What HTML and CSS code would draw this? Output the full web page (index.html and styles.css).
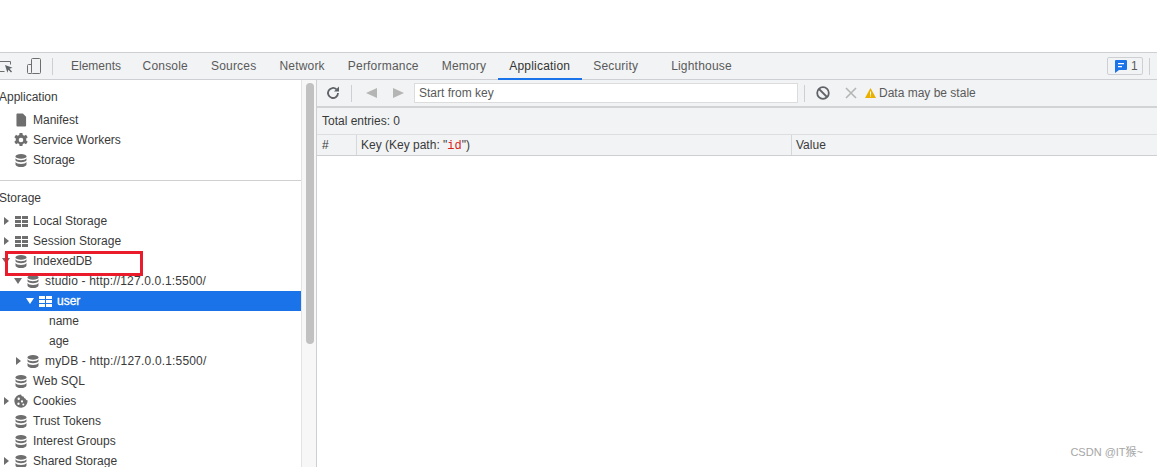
FILE: index.html
```html
<!DOCTYPE html>
<html lang="en">
<head>
<meta charset="utf-8">
<title>DevTools Application</title>
<link rel="stylesheet" href="styles.css">
</head>
<body>
<svg class="defs" width="0" height="0" aria-hidden="true">
  <symbol id="db" viewBox="0 0 12 13">
    <ellipse cx="6" cy="2.400" rx="5.500" ry="2.300"/>
    <path d="M.5 4.200c.6 1.300 2.800 2 5.500 2s4.900-.7 5.500-2v1.900C11.500 7.400 9 8.300 6 8.300S.5 7.400.5 6.100z"/>
    <path d="M.5 8c.6 1.300 2.800 2 5.500 2s4.900-.7 5.500-2v2.400C11.500 11.900 9 13 6 13S.5 11.900.5 10.400z"/>
  </symbol>
  <symbol id="table" viewBox="0 0 13 11">
    <path d="M0 0h6v3H0zM7 0h6v3H7zM0 4h6v3H0zM7 4h6v3H7zM0 8h6v3H0zM7 8h6v3H7z"/>
  </symbol>
  <symbol id="file" viewBox="0 0 12 14">
    <path d="M1.500 0H7.500L11 3.500V13a1 1 0 0 1-1 1H1.500a1 1 0 0 1-1-1V1a1 1 0 0 1 1-1z"/>
  </symbol>
  <symbol id="gear" viewBox="0 0 14 14">
    <path fill-rule="evenodd" d="M5.600 0h2.800l.4 2 1.500.7L12 1.700l1.700 2.500-1.500 1.400v1.800l1.500 1.400-1.700 2.500-1.700-1-1.500.7-.4 2H5.600l-.4-2-1.500-.7-1.700 1L.3 8.800l1.500-1.400V5.600L.3 4.200 2 1.700l1.700 1 1.500-.7zM7 4.700a2.300 2.300 0 1 0 0 4.600 2.300 2.300 0 0 0 0-4.600z"/>
  </symbol>
  <symbol id="cookie" viewBox="0 0 14 14">
    <path fill-rule="evenodd" d="M7 .5c.4 1.400 1.400 2 2.600 2 .2 1.300 1 2 2 2.200.3 1 1 1.500 1.900 1.600A6.600 6.600 0 1 1 7 .5zM4.700 3.500a1.200 1.200 0 1 0 0 2.400 1.200 1.200 0 0 0 0-2.400zM8 6.300a1.100 1.100 0 1 0 0 2.200 1.100 1.100 0 0 0 0-2.200zM4.500 8.600a1.200 1.200 0 1 0 0 2.400 1.200 1.200 0 0 0 0-2.400zM9.300 9.500a1 1 0 1 0 0 2 1 1 0 0 0 0-2z"/>
  </symbol>
  <symbol id="arrow-right" viewBox="0 0 5 8"><path d="M0 0l5 4-5 4z"/></symbol>
  <symbol id="arrow-down" viewBox="0 0 8 6"><path d="M0 0h8L4 6z"/></symbol>
</svg>

<div class="top-space"></div>

<header class="tabbar">
  <svg class="tool-inspect" width="15" height="15" viewBox="0 0 15 15" fill="none">
    <path d="M5.500 12.500H.5V2.500h11v3" stroke="#6e6e6e"/>
    <path d="M6 6l7.500 2.800-3 1 2.500 2.700-1 1-2.600-2.700-1 3z" fill="#5f6368"/>
  </svg>
  <svg class="tool-device" width="14" height="16" viewBox="0 0 14 16" fill="none" stroke="#6e6e6e">
    <rect x="4.500" y=".5" width="9" height="15" rx="1"/>
    <path d="M4.500 6.500h-3a1 1 0 0 0-1 1v7a1 1 0 0 0 1 1h3"/>
  </svg>
  <span class="vsep tab-sep"></span>
  <nav class="tabs">
    <span class="tab">Elements</span>
    <span class="tab">Console</span>
    <span class="tab">Sources</span>
    <span class="tab">Network</span>
    <span class="tab">Performance</span>
    <span class="tab">Memory</span>
    <span class="tab active">Application</span>
    <span class="tab">Security</span>
    <span class="tab tab-far">Lighthouse</span>
  </nav>
  <div class="issues">
    <svg width="12" height="13" viewBox="0 0 12 13">
      <path d="M1 0h10a1 1 0 0 1 1 1v8a1 1 0 0 1-1 1H4l-4 3V1a1 1 0 0 1 1-1z" fill="#1a73e8"/>
      <path d="M3 3h6v1.300H3zM3 6h4v1.300H3z" fill="#fff"/>
    </svg>
    <span>1</span>
  </div>
  <span class="vsep issue-sep"></span>
</header>

<main class="main">
  <aside class="sidebar">
    <div class="section-title">Application</div>
    <div class="row lvl0"><span class="arrow"></span><svg class="ico ico-file"><use href="#file"/></svg><span>Manifest</span></div>
    <div class="row lvl0"><span class="arrow"></span><svg class="ico ico-gear"><use href="#gear"/></svg><span>Service Workers</span></div>
    <div class="row lvl0"><span class="arrow"></span><svg class="ico"><use href="#db"/></svg><span>Storage</span></div>
    <div class="divider"></div>
    <div class="section-title">Storage</div>
    <div class="row lvl0"><span class="arrow"><svg class="ar"><use href="#arrow-right"/></svg></span><svg class="ico ico-table"><use href="#table"/></svg><span>Local Storage</span></div>
    <div class="row lvl0"><span class="arrow"><svg class="ar"><use href="#arrow-right"/></svg></span><svg class="ico ico-table"><use href="#table"/></svg><span>Session Storage</span></div>
    <div class="row lvl0"><span class="arrow"><svg class="ad"><use href="#arrow-down"/></svg></span><svg class="ico"><use href="#db"/></svg><span>IndexedDB</span></div>
    <div class="row lvl1"><span class="arrow"><svg class="ad"><use href="#arrow-down"/></svg></span><svg class="ico"><use href="#db"/></svg><span class="url">studio - http://127.0.0.1:5500/</span></div>
    <div class="row lvl2 selected"><span class="arrow"><svg class="ad"><use href="#arrow-down"/></svg></span><svg class="ico ico-table"><use href="#table"/></svg><span>user</span></div>
    <div class="row leaf">name</div>
    <div class="row leaf">age</div>
    <div class="row lvl1"><span class="arrow"><svg class="ar"><use href="#arrow-right"/></svg></span><svg class="ico"><use href="#db"/></svg><span class="url">myDB - http://127.0.0.1:5500/</span></div>
    <div class="row lvl0"><span class="arrow"></span><svg class="ico"><use href="#db"/></svg><span>Web SQL</span></div>
    <div class="row lvl0"><span class="arrow"><svg class="ar"><use href="#arrow-right"/></svg></span><svg class="ico ico-cookie"><use href="#cookie"/></svg><span>Cookies</span></div>
    <div class="row lvl0"><span class="arrow"></span><svg class="ico"><use href="#db"/></svg><span>Trust Tokens</span></div>
    <div class="row lvl0"><span class="arrow"></span><svg class="ico"><use href="#db"/></svg><span>Interest Groups</span></div>
    <div class="row lvl0"><span class="arrow"><svg class="ar"><use href="#arrow-right"/></svg></span><svg class="ico"><use href="#db"/></svg><span>Shared Storage</span></div>
    <div class="highlight"></div>
  </aside>

  <div class="scrollbar"><div class="thumb"></div></div>

  <section class="panel">
    <div class="toolbar">
      <svg class="t-refresh" width="14" height="14" viewBox="0 0 14 14" fill="none">
        <path d="M12 7a5 5 0 1 1-1.500-3.600" stroke="#5f6368" stroke-width="1.800"/>
        <path d="M13 .6v5H8z" fill="#5f6368"/>
      </svg>
      <span class="vsep t-sep1"></span>
      <svg class="t-back" width="11" height="10" viewBox="0 0 11 10"><path d="M11 0v10L0 5z" fill="#b5b5b5"/></svg>
      <svg class="t-forward" width="11" height="10" viewBox="0 0 11 10"><path d="M0 0v10l11-5z" fill="#b5b5b5"/></svg>
      <div class="key-input">Start from key</div>
      <span class="vsep t-sep2"></span>
      <svg class="t-block" width="14" height="14" viewBox="0 0 14 14" fill="none" stroke="#5f6368" stroke-width="1.800">
        <circle cx="7" cy="7" r="5.800"/><path d="M3 3l8 8"/>
      </svg>
      <svg class="t-close" width="12" height="12" viewBox="0 0 12 12" fill="none" stroke="#b5b5b5" stroke-width="1.600">
        <path d="M1 1l10 10M11 1L1 11"/>
      </svg>
      <svg class="t-warn" width="11" height="10" viewBox="0 0 11 10">
        <path d="M5.500 0L11 10H0z" fill="#eab000"/>
        <path d="M5 3.500h1v3.300H5zM5 7.600h1v1H5z" fill="#fff"/>
      </svg>
      <span class="stale">Data may be stale</span>
    </div>
    <div class="total">Total entries: 0</div>
    <div class="columns">
      <div class="col col-num">#</div>
      <div class="col col-key">Key (Key path: "<code class="key-id">id</code>")</div>
      <div class="col col-value">Value</div>
    </div>
  </section>
</main>

<div class="watermark">CSDN @IT猴~</div>
</body>
</html>
```
FILE: styles.css
```css
* { box-sizing: border-box; }
html, body { margin: 0; height: 100%; }
body {
  position: relative;
  width: 1157px;
  height: 467px;
  overflow: hidden;
  background: #fff;
  color: #3a3a3a;
  font: 12px/20px "Liberation Sans", Arial, "Noto Sans CJK SC", sans-serif;
}
.defs { position: absolute; }
.top-space { height: 52px; }

.tabbar {
  display: flex;
  align-items: center;
  height: 28px;
  background: #f1f3f4;
  border-top: 1px solid #cdcfd2;
  border-bottom: 1px solid #cdcfd2;
}
.vsep { width: 1px; height: 17px; background: #cdcfd2; flex: none; }
.tool-inspect { flex: none; margin-left: -1px; }
.tool-device { flex: none; margin-left: 13px; }
.tab-sep { margin-left: 11px; }
.tabs { display: flex; align-self: stretch; margin-left: 5.5px; }
.tab {
  display: flex;
  align-items: center;
  padding: 0 11.5px;
  letter-spacing: .2px;
  color: #5a5a5a;
  margin-bottom: -1px;
  border-bottom: 2px solid transparent;
}
.tab:first-child { letter-spacing: 0; margin-left: 1px; margin-right: -1.5px; }
.tab-far { margin-left: 10px; }
.tab.active { color: #333; border-bottom-color: #1a73e8; }
.issues {
  display: flex;
  align-items: center;
  gap: 4px;
  margin-left: auto;
  width: 36px;
  height: 18px;
  padding-left: 7px;
  border: 1px solid #cdcfd2;
  border-radius: 2px;
  color: #5a5a5a;
}
.issue-sep { margin: 0 7px 0 6px; }

.main { display: flex; height: 387px; }
.sidebar {
  position: relative;
  flex: none;
  width: 301px;
  overflow: hidden;
}
.section-title {
  height: 30px;
  padding-top: 7px;
  margin-left: -1px;
}
.divider { height: 1px; margin-top: 10px; background: #d0d0d0; }
.row { display: flex; align-items: center; height: 20px; white-space: nowrap; }
.lvl0 { padding-left: 3px; }
.lvl1 { padding-left: 15px; }
.lvl2 { padding-left: 27px; }
.leaf { padding-left: 49px; }
.url { letter-spacing: .16px; }
.selected { background: #1a73e8; color: #fff; font-weight: 500; -webkit-text-stroke: .3px #fff; }
.arrow { display: flex; align-items: center; width: 12px; flex: none; height: 12px; fill: #6e6e6e; }
.ar { width: 5px; height: 8px; margin-left: 1px; }
.ad { width: 8px; height: 6px; margin-left: -1px; }
.selected .arrow { fill: #fff; }
.ico { width: 12px; height: 13px; margin-right: 6px; flex: none; fill: #6e6e6e; }
.selected .ico { fill: #fff; }
.ico-table { width: 13px; height: 11px; margin-right: 5px; }
.ico-file { width: 11px; height: 14px; margin: 0 6px 0 1px; }
.ico-gear { width: 14px; height: 14px; margin: 0 5px 0 -1px; }
.ico-cookie { width: 14px; height: 14px; margin: 0 5px 0 -1px; }
.highlight {
  position: absolute;
  left: 5px;
  top: 171px;
  width: 138px;
  height: 25px;
  border: 3px solid #ea1c2c;
}

.scrollbar {
  flex: none;
  width: 16px;
  padding: 3px 3px 0 4px;
  background: #f7f7f7;
  border-left: 1px solid #e3e3e3;
  border-right: 1px solid #cdcfd2;
}
.thumb { width: 8px; height: 261px; border-radius: 4px; background: #c1c1c1; }

.panel { flex: 1; min-width: 0; }
.toolbar {
  display: flex;
  align-items: center;
  height: 28px;
  background: #f1f3f4;
  border-bottom: 2px solid #d2d3d5;
}
.toolbar svg { flex: none; }
.t-refresh { margin-left: 9px; }
.t-sep1 { margin-left: 11px; }
.t-back { margin-left: 14px; }
.t-forward { margin-left: 16px; }
.key-input {
  width: 384px;
  height: 20px;
  margin-left: 10px;
  padding-left: 4px;
  line-height: 19px;
  background: #fff;
  border: 1px solid #dcdcdc;
  color: #5a5a5a;
}
.t-sep2 { margin-left: 6px; }
.t-block { margin-left: 11px; }
.t-close { margin-left: 15px; }
.t-warn { margin-left: 8px; }
.stale { margin-left: 3px; color: #5a5a5a; }
.total {
  height: 27px;
  padding-left: 5px;
  line-height: 26px;
  background: #f1f3f4;
  border-bottom: 1px solid #dcdee0;
}
.columns {
  display: flex;
  height: 21px;
  line-height: 20px;
  background: #f1f3f4;
  border-bottom: 1px solid #cdcfd2;
}
.col { padding-left: 5px; }
.col-num { width: 40px; border-right: 1px solid #d5d7d9; }
.col-key { width: 435px; padding-left: 4px; border-right: 1px solid #d5d7d9; }
.col-value { padding-left: 4px; }
.key-id { font: 12px "Liberation Mono", monospace; color: #d9231c; }

.watermark {
  position: absolute;
  right: 14px;
  bottom: 5px;
  font-size: 11px;
  color: #a6a6a6;
}
```
